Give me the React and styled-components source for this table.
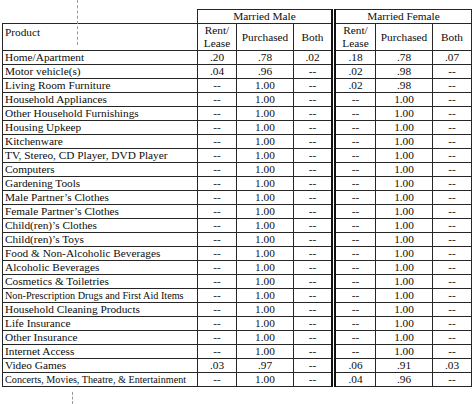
import React from 'react';
import styled, { createGlobalStyle } from 'styled-components';

const GlobalStyle = createGlobalStyle`
  html, body {
    margin: 0;
    padding: 0;
    background: #fff;
  }
  body {
    font-family: "Liberation Serif", "Times New Roman", serif;
    color: #0d0d0d;
  }
`;

const rows = [
    ['Home/Apartment', '.20', '.78', '.02', '.18', '.78', '.07'],
    ['Motor vehicle(s)', '.04', '.96', '--', '.02', '.98', '--'],
    ['Living Room Furniture', '--', '1.00', '--', '.02', '.98', '--'],
    ['Household Appliances'],
    ['Other Household Furnishings'],
    ['Housing Upkeep'],
    ['Kitchenware'],
    ['TV, Stereo, CD Player, DVD Player'],
    ['Computers'],
    ['Gardening Tools'],
    ['Male Partner’s Clothes'],
    ['Female Partner’s Clothes'],
    ['Child(ren)’s Clothes'],
    ['Child(ren)’s Toys'],
    ['Food & Non-Alcoholic Beverages'],
    ['Alcoholic Beverages'],
    ['Cosmetics & Toiletries'],
    ['Non-Prescription Drugs and First Aid Items'],
    ['Household Cleaning Products'],
    ['Life Insurance'],
    ['Other Insurance'],
    ['Internet Access'],
    ['Video Games', '.03', '.97', '--', '.06', '.91', '.03'],
    ['Concerts, Movies, Theatre, & Entertainment', '--', '1.00', '--', '.04', '.96', '--'],
];

const defaults = ['--', '1.00', '--', '--', '1.00', '--'];

const App = () => {
    return (
        <Page>
            <GlobalStyle />
            <Table>
                <colgroup>
                    <col style={{ width: 195 }} />
                    <col style={{ width: 39 }} />
                    <col style={{ width: 57 }} />
                    <col style={{ width: 40 }} />
                    <col style={{ width: 42 }} />
                    <col style={{ width: 57 }} />
                    <col style={{ width: 39 }} />
                </colgroup>
                <thead>
                    <GroupRow>
                        <Blank />
                        <GroupHead colSpan={3} $divider>Married Male</GroupHead>
                        <GroupHead colSpan={3}>Married Female</GroupHead>
                    </GroupRow>
                    <SubRow>
                        <ProductHead>Product</ProductHead>
                        <SubHead>Rent/<br />Lease</SubHead>
                        <SubHead>Purchased</SubHead>
                        <SubHead $divider>Both</SubHead>
                        <SubHead>Rent/<br />Lease</SubHead>
                        <SubHead>Purchased</SubHead>
                        <SubHead>Both</SubHead>
                    </SubRow>
                </thead>
                <tbody>
                    {rows.map(([name, ...vals]) => {
                        const values = vals.length ? vals : defaults;
                        return (
                            <DataRow key={name}>
                                <Name $tight={name.length > 40}>{name}</Name>
                                {values.map((v, i) => (
                                    <Value key={i} $divider={i === 2}>{v}</Value>
                                ))}
                            </DataRow>
                        );
                    })}
                </tbody>
            </Table>
            <Crease $top={0} $height={45} $left={77} />
            <Crease $top={392} $height={12} $left={72} />
        </Page>
    );
};

export default App;

const Page = styled.div`
    position: relative;
    box-sizing: border-box;
    width: 474px;
    height: 404px;
    padding: 9px 0 0 2px;
    overflow: hidden;
`;

const Table = styled.table`
    border-collapse: collapse;
    table-layout: fixed;
    width: 469px;
    font-size: 11.3px;
    line-height: 13px;

    th, td {
        border: 1px solid #262626;
        padding: 0;
        font-weight: normal;
    }
`;

const GroupRow = styled.tr`
    height: 14px;
`;

const SubRow = styled.tr`
    height: 27px;
`;

const DataRow = styled.tr`
    height: 14px;
`;

const Blank = styled.th`
    && {
        border: none;
    }
`;

const GroupHead = styled.th`
    text-align: center;
    vertical-align: middle;
    && {
        border-right: ${(p) => (p.$divider ? '5px double #111' : '1px solid #262626')};
    }
`;

const ProductHead = styled.th`
    text-align: left;
    vertical-align: top;
    && {
        padding: 2px 0 0 2px;
    }
`;

const SubHead = styled.th`
    text-align: center;
    vertical-align: middle;
    && {
        border-right: ${(p) => (p.$divider ? '5px double #111' : '1px solid #262626')};
    }
`;

const Name = styled.td`
    text-align: left;
    white-space: nowrap;
    font-size: ${(p) => (p.$tight ? '10.2px' : '11.3px')};
    && {
        padding-left: 2px;
    }
`;

const Value = styled.td`
    text-align: center;
    && {
        border-right: ${(p) => (p.$divider ? '5px double #111' : '1px solid #262626')};
    }
`;

const Crease = styled.div`
    position: absolute;
    top: ${(p) => p.$top}px;
    left: ${(p) => p.$left}px;
    height: ${(p) => p.$height}px;
    border-left: 1px dashed #9a9a9a;
`;
